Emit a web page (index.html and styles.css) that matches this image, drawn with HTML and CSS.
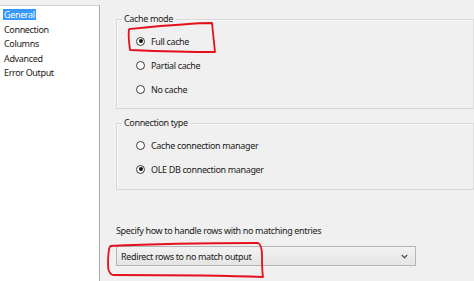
FILE: index.html
```html
<!DOCTYPE html>
<html>
<head>
<meta charset="utf-8">
<link rel="stylesheet" href="styles.css">
</head>
<body>
<div class="page">
  <div class="nav">
    <div class="nav-item selected"><span>General</span></div>
    <div class="nav-item"><span>Connection</span></div>
    <div class="nav-item"><span>Columns</span></div>
    <div class="nav-item"><span>Advanced</span></div>
    <div class="nav-item"><span>Error Output</span></div>
  </div>
  <div class="main">
    <fieldset class="group group-cache">
      <legend>Cache mode</legend>
      <div class="radio-row"><span class="radio checked"></span><span>Full cache</span></div>
      <div class="radio-row"><span class="radio"></span><span>Partial cache</span></div>
      <div class="radio-row"><span class="radio"></span><span>No cache</span></div>
    </fieldset>
    <fieldset class="group group-conn">
      <legend>Connection type</legend>
      <div class="radio-row"><span class="radio"></span><span>Cache connection manager</span></div>
      <div class="radio-row"><span class="radio checked"></span><span>OLE DB connection manager</span></div>
    </fieldset>
    <div class="spec">Specify how to handle rows with no matching entries</div>
    <div class="select">
      <span>Redirect rows to no match output</span>
      <svg class="chev" width="7" height="5" viewBox="0 0 7 5"><path d="M0.8 1 L3.5 3.8 L6.2 1" fill="none" stroke="#555" stroke-width="1.3"/></svg>
    </div>
  </div>
</div>
<svg class="marks" width="474" height="281" viewBox="0 0 474 281">
  <path d="M129 29 C150 27 190 23 212 23 C213 32 214 42 215 52 C185 52 155 51 130 50 C129 42 128 36 129 29" fill="none" stroke="#e4101c" stroke-width="1.8" stroke-linejoin="round"/>
  <path d="M110 246 C150 244 210 243 258 243 C261 244 262 250 262 256 C262 264 262 271 263 277 C215 275 160 275 113 275 C109 274 108 270 108 265 C108 258 108 251 110 246" fill="none" stroke="#e4101c" stroke-width="1.8" stroke-linejoin="round"/>
</svg>
</body>
</html>
```
FILE: styles.css
```css
html, body {
  margin: 0;
  padding: 0;
}
body {
  width: 474px;
  height: 281px;
  overflow: hidden;
  background: #f0f0f0;
  font-family: "Segoe UI", "Noto Sans", "DejaVu Sans", sans-serif;
  font-size: 9px;
  letter-spacing: -0.35px;
  color: #1a1a1a;
  position: relative;
}
.page {
  display: flex;
  height: 281px;
}
.nav {
  width: 100px;
  margin-top: 5px;
  background: #ffffff;
  border-top: 1px solid #cfcfcf;
  border-right: 1px solid #a8a8a8;
  padding-top: 2px;
  box-sizing: border-box;
}
.nav-item {
  height: 14.5px;
  line-height: 14.5px;
  padding-left: 3px;
}
.nav-item span {
  display: inline-block;
  line-height: 11px;
  padding: 0 1px;
}
.nav-item.selected span {
  background: #3399ff;
  color: #ffffff;
}
.main {
  flex: 1;
  padding-top: 13px;
  padding-left: 16px;
  display: flex;
  flex-direction: column;
}
.group {
  margin: 0 0 0 0;
  padding: 4px 0 0 0;
  border: 1px solid #d9d9d9;
  border-right-color: #dddddd;
  box-shadow: inset 1px 1px 0 #f8f8f8;
  min-width: 0;
}
.group legend {
  padding: 0 2px;
  margin-left: 5px;
  line-height: 12px;
  height: 12px;
}
.group-cache {
  padding-bottom: 7px;
}
.group-conn {
  margin-top: 8px;
  padding-bottom: 8px;
}
.radio-row {
  height: 24px;
  display: flex;
  align-items: center;
  padding-left: 19px;
}
.radio {
  width: 9px;
  height: 9px;
  border: 1px solid #3c3c3c;
  border-radius: 50%;
  background: #ffffff;
  box-sizing: border-box;
  margin-right: 6px;
  position: relative;
  flex: none;
}
.radio.checked::after {
  content: "";
  position: absolute;
  left: 1.5px;
  top: 1.5px;
  width: 4px;
  height: 4px;
  border-radius: 50%;
  background: #111111;
}
.spec {
  margin-top: 35px;
  line-height: 12px;
  height: 12px;
}
.select {
  margin-top: 9px;
  width: 300px;
  height: 20px;
  box-sizing: border-box;
  border: 1px solid #b5b5b5;
  background: linear-gradient(#f2f2f2, #e5e5e5);
  display: flex;
  align-items: center;
  justify-content: space-between;
  padding: 0 7px 0 4px;
}
.chev {
  display: block;
}
.marks {
  position: absolute;
  left: 0;
  top: 0;
  pointer-events: none;
}
```
